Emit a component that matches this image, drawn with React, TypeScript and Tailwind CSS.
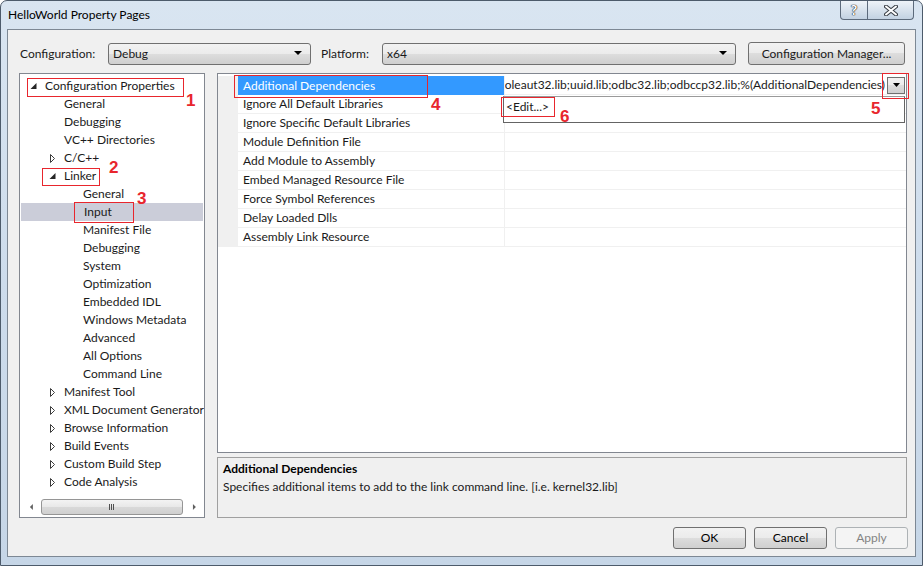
import React from "react";

type TreeNode = {
  label: string;
  level: 0 | 1 | 2;
  icon?: "open" | "closed";
  selected?: boolean;
};

const tree: TreeNode[] = [
  { label: "Configuration Properties", level: 0, icon: "open" },
  { label: "General", level: 1 },
  { label: "Debugging", level: 1 },
  { label: "VC++ Directories", level: 1 },
  { label: "C/C++", level: 1, icon: "closed" },
  { label: "Linker", level: 1, icon: "open" },
  { label: "General", level: 2 },
  { label: "Input", level: 2, selected: true },
  { label: "Manifest File", level: 2 },
  { label: "Debugging", level: 2 },
  { label: "System", level: 2 },
  { label: "Optimization", level: 2 },
  { label: "Embedded IDL", level: 2 },
  { label: "Windows Metadata", level: 2 },
  { label: "Advanced", level: 2 },
  { label: "All Options", level: 2 },
  { label: "Command Line", level: 2 },
  { label: "Manifest Tool", level: 1, icon: "closed" },
  { label: "XML Document Generator", level: 1, icon: "closed" },
  { label: "Browse Information", level: 1, icon: "closed" },
  { label: "Build Events", level: 1, icon: "closed" },
  { label: "Custom Build Step", level: 1, icon: "closed" },
  { label: "Code Analysis", level: 1, icon: "closed" },
];

const indent = ["pl-[9px]", "pl-[28px]", "pl-[47px]"];

const properties = [
  "Additional Dependencies",
  "Ignore All Default Libraries",
  "Ignore Specific Default Libraries",
  "Module Definition File",
  "Add Module to Assembly",
  "Embed Managed Resource File",
  "Force Symbol References",
  "Delay Loaded Dlls",
  "Assembly Link Resource",
];

const deps =
  "kernel32.lib;user32.lib;gdi32.lib;winspool.lib;comdlg32.lib;advapi32.lib;shell32.lib;ole32.lib;oleaut32.lib;uuid.lib;odbc32.lib;odbccp32.lib;%(AdditionalDependencies)";

// windows 7 "aero basic" button face
const face =
  "bg-[linear-gradient(to_bottom,#f2f2f2_0%,#ebebeb_50%,#dddddd_50%,#cfcfcf_100%)]";

function DownArrow() {
  return (
    <svg width="9" height="5" viewBox="0 0 9 5">
      <polygon points="0,0 8,0 4,4" fill="#000" />
    </svg>
  );
}

function Expander({ kind }: { kind?: "open" | "closed" }) {
  if (!kind) return <span className="w-[16px] shrink-0" />;
  return (
    <svg width="16" height="16" viewBox="0 0 16 16" className="shrink-0">
      {kind === "open" ? (
        <polygon points="7.5,5 7.5,11 1.5,11" fill="#262626" />
      ) : (
        <polygon
          points="2.5,4.5 6.5,8.5 2.5,12.5"
          fill="#fff"
          stroke="#3c3c3c"
          strokeWidth="1"
        />
      )}
    </svg>
  );
}

function Combo({ value, className }: { value: string; className: string }) {
  return (
    <div
      className={`h-[22px] flex items-center rounded-[3px] border border-[#707070] pl-[4px] pr-[7px] ${face} ${className}`}
    >
      <span className="flex-1">{value}</span>
      <DownArrow />
    </div>
  );
}

function Btn({ label, disabled }: { label: string; disabled?: boolean }) {
  return (
    <button
      className={
        disabled
          ? "w-[73px] h-[22px] rounded-[3px] border border-[#adb2b5] bg-[#f4f4f4] text-[#838383]"
          : `w-[73px] h-[22px] rounded-[3px] border border-[#707070] text-black ${face}`
      }
    >
      {label}
    </button>
  );
}

export default function App() {
  return (
    <div className="w-[924px] h-[566px] bg-white text-[12px] leading-none text-[#1a1a1a] font-['Lato',sans-serif] overflow-hidden">
      <div className="relative w-[923px] h-[566px] flex flex-col rounded-t-[7px] border border-[#4d5b6b] bg-linear-to-b from-[#d9e5f1] via-[#cddcec] to-[#c6d6e7]">
        {/* title bar */}
        <div className="h-[28px] flex items-start shrink-0">
          <div className="pl-[7px] pt-[8px] text-black">HelloWorld Property Pages</div>
          <div className="ml-auto mr-[8px] flex">
            <div className="w-[28px] h-[19px] flex items-center justify-center rounded-bl-[4px] border border-t-0 border-[#5c6a7b] bg-linear-to-b from-[#eef3f8] to-[#c3d2e2] text-white font-bold text-[14px] [text-shadow:0_0_1px_#222,0_0_1px_#222,0_0_1px_#222]">
              ?
            </div>
            <div className="w-[46px] h-[19px] flex items-center justify-center rounded-br-[4px] border border-t-0 border-l-0 border-[#5c6a7b] bg-linear-to-b from-[#eef3f8] to-[#c3d2e2]">
              <svg width="14" height="11" viewBox="0 0 14 11">
                <path d="M2 1.5 L12 9.5 M12 1.5 L2 9.5" stroke="#3a3f46" strokeWidth="4" strokeLinecap="round" />
                <path d="M2 1.5 L12 9.5 M12 1.5 L2 9.5" stroke="#fff" strokeWidth="2" strokeLinecap="round" />
              </svg>
            </div>
          </div>
        </div>

        {/* client area */}
        <div className="flex-1 mx-[6px] mb-[8px] border border-[#7d8894] bg-[#f0f0f0] flex flex-col">
          <div className="mt-[12px] h-[23px] flex items-center pl-[12px]">
            <span className="w-[88px]">Configuration:</span>
            <Combo value="Debug" className="w-[203px]" />
            <span className="ml-[10px] w-[61px]">Platform:</span>
            <Combo value="x64" className="w-[354px]" />
            <button className={`ml-[12px] w-[157px] h-[23px] rounded-[3px] border border-[#707070] ${face}`}>
              Configuration Manager...
            </button>
          </div>

          <div className="mt-[8px] flex pl-[11px] gap-[12px]">
            {/* tree */}
            <div className="w-[186px] h-[445px] border border-[#828790] bg-white flex flex-col overflow-hidden">
              <div className="flex-1 pt-[3px]">
                {tree.map((n, i) => (
                  <div
                    key={i}
                    className={`h-[18px] flex items-center whitespace-nowrap ${indent[n.level]} ${n.selected ? "bg-[#cbcdd9] mx-[1px]" : ""}`}
                  >
                    <Expander kind={n.icon} />
                    <span>{n.label}</span>
                  </div>
                ))}
              </div>
              <div className="h-[18px] mb-[1px] flex items-center px-[2px]">
                <svg width="14" height="14" viewBox="0 0 14 14" className="ml-[3px]">
                  <polygon points="8,4 8,10 5,7" fill="#606060" />
                </svg>
                <div className="ml-[2px] w-[145px] h-[16px] rounded-[3px] border border-[#959595] flex items-center justify-center bg-[linear-gradient(to_bottom,#f3f3f3_0%,#e8e8e8_50%,#d9d9d9_50%,#d0d0d0_100%)]">
                  <svg width="8" height="6" viewBox="0 0 8 6">
                    <path d="M1.5 0 V6 M3.5 0 V6 M5.5 0 V6" stroke="#505050" strokeWidth="1" />
                  </svg>
                </div>
                <svg width="14" height="14" viewBox="0 0 14 14" className="ml-[5px]">
                  <polygon points="5,4 5,10 8,7" fill="#606060" />
                </svg>
              </div>
            </div>

            {/* right side */}
            <div className="w-[690px] flex flex-col gap-[4px]">
              <div className="relative h-[380px] border border-[#828790] bg-white pt-[2px]">
                {properties.map((p, i) => (
                  <div key={p} className="h-[19px] flex">
                    <div className="w-[20px] shrink-0 bg-[#f0f0f0]" />
                    <div
                      className={`w-[267px] shrink-0 flex items-center pl-[5px] whitespace-nowrap border-r border-[#f0f0f0] ${i === 0 ? "bg-[#3399ff] text-white" : "border-b"}`}
                    >
                      {p}
                    </div>
                    <div className="flex-1 min-w-0 flex items-center border-b border-[#f0f0f0] pr-[1px]">
                      {i === 0 && (
                        <>
                          <div className="flex-1 min-w-0 flex justify-end overflow-hidden whitespace-nowrap">
                            <span className="shrink-0">{deps}</span>
                          </div>
                          <div className={`ml-[2px] shrink-0 w-[18px] h-[17px] flex items-center justify-center border border-[#707070] ${face}`}>
                            <svg width="7" height="4" viewBox="0 0 7 4">
                              <polygon points="0,0 7,0 3.5,4" fill="#000" />
                            </svg>
                          </div>
                        </>
                      )}
                    </div>
                  </div>
                ))}

                {/* opened drop-down */}
                <div className="absolute left-[285px] top-[22px] w-[402px] h-[27px] bg-white border border-[#646464] border-t-[#9a9a9a] border-t-dotted pl-[2px] pt-[4px]">
                  &lt;Edit...&gt;
                </div>
              </div>

              <div className="h-[61px] border border-[#a0a0a0] bg-[#f0f0f0] pl-[5px] pt-[2px]">
                <div className="h-[18px] flex items-center font-bold text-black">Additional Dependencies</div>
                <div className="h-[18px] flex items-center">
                  Specifies additional items to add to the link command line. [i.e. kernel32.lib]
                </div>
              </div>
            </div>
          </div>

          <div className="mt-[9px] flex justify-end gap-[8px] pr-[7px]">
            <Btn label="OK" />
            <Btn label="Cancel" />
            <Btn label="Apply" disabled />
          </div>
        </div>

        {/* red callouts drawn over the dialog */}
        <div className="absolute left-[26px] top-[77px] w-[157px] h-[19px] border border-[#e8262d]" />
        <div className="absolute left-[185px] top-[91px] text-[#e8262d] font-bold text-[17px] font-['Liberation_Sans',sans-serif]">1</div>
        <div className="absolute left-[41px] top-[167px] w-[58px] h-[18px] border border-[#e8262d]" />
        <div className="absolute left-[108px] top-[158px] text-[#e8262d] font-bold text-[17px] font-['Liberation_Sans',sans-serif]">2</div>
        <div className="absolute left-[73px] top-[201px] w-[60px] h-[21px] border border-[#e8262d]" />
        <div className="absolute left-[136px] top-[189px] text-[#e8262d] font-bold text-[17px] font-['Liberation_Sans',sans-serif]">3</div>
        <div className="absolute left-[233px] top-[74px] w-[194px] h-[23px] border border-[#e8262d]" />
        <div className="absolute left-[430px] top-[95px] text-[#e8262d] font-bold text-[17px] font-['Liberation_Sans',sans-serif]">4</div>
        <div className="absolute left-[881px] top-[72px] w-[27px] h-[26px] border border-[#e8262d]" />
        <div className="absolute left-[870px] top-[99px] text-[#e8262d] font-bold text-[17px] font-['Liberation_Sans',sans-serif]">5</div>
        <div className="absolute left-[500px] top-[96px] w-[54px] h-[20px] border border-[#e8262d]" />
        <div className="absolute left-[559px] top-[107px] text-[#e8262d] font-bold text-[17px] font-['Liberation_Sans',sans-serif]">6</div>
      </div>
    </div>
  );
}
